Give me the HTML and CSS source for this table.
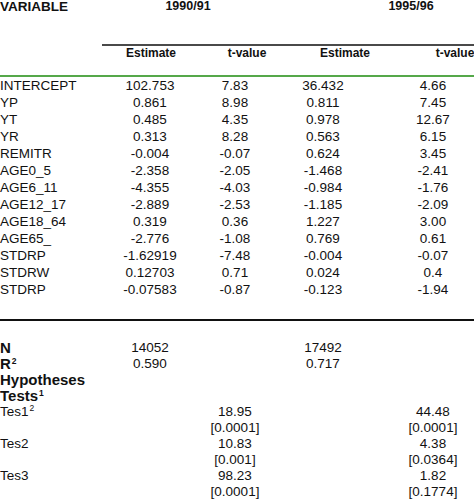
FILE: index.html
```html
<!DOCTYPE html>
<html>
<head>
<meta charset="utf-8">
<link rel="stylesheet" href="styles.css">
</head>
<body>
<div class="table">
  <div class="years">
    <span class="var">VARIABLE</span>
    <span class="yr">1990/91</span>
    <span></span>
    <span class="yr">1995/96</span>
  </div>
  <div class="rule-gray"></div>
  <div class="heads">
    <span></span>
    <span>Estimate</span>
    <span>t-value</span>
    <span>Estimate</span>
    <span>t-value</span>
  </div>
  <div class="rule-green"></div>
  <div class="rows">
    <div class="row"><span class="lbl">INTERCEPT</span><span class="v">102.753</span><span class="v">7.83</span><span class="v">36.432</span><span class="v">4.66</span></div>
    <div class="row"><span class="lbl">YP</span><span class="v">0.861</span><span class="v">8.98</span><span class="v">0.811</span><span class="v">7.45</span></div>
    <div class="row"><span class="lbl">YT</span><span class="v">0.485</span><span class="v">4.35</span><span class="v">0.978</span><span class="v">12.67</span></div>
    <div class="row"><span class="lbl">YR</span><span class="v">0.313</span><span class="v">8.28</span><span class="v">0.563</span><span class="v">6.15</span></div>
    <div class="row"><span class="lbl">REMITR</span><span class="v">-0.004</span><span class="v">-0.07</span><span class="v">0.624</span><span class="v">3.45</span></div>
    <div class="row"><span class="lbl">AGE0_5</span><span class="v">-2.358</span><span class="v">-2.05</span><span class="v">-1.468</span><span class="v">-2.41</span></div>
    <div class="row"><span class="lbl">AGE6_11</span><span class="v">-4.355</span><span class="v">-4.03</span><span class="v">-0.984</span><span class="v">-1.76</span></div>
    <div class="row"><span class="lbl">AGE12_17</span><span class="v">-2.889</span><span class="v">-2.53</span><span class="v">-1.185</span><span class="v">-2.09</span></div>
    <div class="row"><span class="lbl">AGE18_64</span><span class="v">0.319</span><span class="v">0.36</span><span class="v">1.227</span><span class="v">3.00</span></div>
    <div class="row"><span class="lbl">AGE65_</span><span class="v">-2.776</span><span class="v">-1.08</span><span class="v">0.769</span><span class="v">0.61</span></div>
    <div class="row"><span class="lbl">STDRP</span><span class="v">-1.62919</span><span class="v">-7.48</span><span class="v">-0.004</span><span class="v">-0.07</span></div>
    <div class="row"><span class="lbl">STDRW</span><span class="v">0.12703</span><span class="v">0.71</span><span class="v">0.024</span><span class="v">0.4</span></div>
    <div class="row"><span class="lbl">STDRP</span><span class="v">-0.07583</span><span class="v">-0.87</span><span class="v">-0.123</span><span class="v">-1.94</span></div>
  </div>
  <div class="rule-black"></div>
  <div class="stats">
    <div class="srow"><span class="blbl">N</span><span class="v">14052</span><span></span><span class="v">17492</span><span></span></div>
    <div class="srow"><span class="blbl">R<sup>2</sup></span><span class="v">0.590</span><span></span><span class="v">0.717</span><span></span></div>
    <div class="srow"><span class="blbl">Hypotheses</span></div>
    <div class="srow"><span class="blbl">Tests<sup>1</sup></span></div>
    <div class="srow"><span class="lbl">Tes1<sup>2</sup></span><span></span><span class="v">18.95<br>[0.0001]</span><span></span><span class="v">44.48<br>[0.0001]</span></div>
    <div class="srow"><span class="lbl">Tes2</span><span></span><span class="v">10.83<br>[0.001]</span><span></span><span class="v">4.38<br>[0.0364]</span></div>
    <div class="srow"><span class="lbl">Tes3</span><span></span><span class="v">98.23<br>[0.0001]</span><span></span><span class="v">1.82<br>[0.1774]</span></div>
  </div>
</div>
</body>
</html>
```
FILE: styles.css
```css
body {
  margin: 0;
  width: 474px;
  height: 500px;
  overflow: hidden;
  background: #fff;
  color: #111;
  font-family: "Liberation Sans", Arial, sans-serif;
}

.table {
  width: 490px;
}

.years {
  display: grid;
  grid-template-columns: 102px 172px 74px 126px;
  font-weight: bold;
  line-height: 13px;
}

.years .var {
  font-size: 13.5px;
}

.years .yr {
  font-size: 12.5px;
  text-align: center;
}

.rule-gray {
  margin: 31px 0 0 102px;
  height: 2px;
  background: #4a4a4a;
}

.heads {
  display: grid;
  grid-template-columns: 102px 98px 94px 102px 118px;
  font-size: 12px;
  font-weight: bold;
  line-height: 15px;
  padding-bottom: 14px;
}

.heads span {
  text-align: center;
}

.rule-green {
  height: 2px;
  background: #55a84a;
}

.row,
.srow {
  display: grid;
  grid-template-columns: 100px 100px 70px 106px 114px;
  font-size: 13.5px;
}

.row {
  line-height: 17px;
}

.srow {
  line-height: 16px;
}

.v {
  text-align: center;
}

.lbl {
  white-space: nowrap;
}

.blbl {
  font-weight: bold;
  font-size: 15px;
  white-space: nowrap;
}

sup {
  font-size: 8.5px;
  line-height: 0;
  vertical-align: 5px;
  margin-left: 1px;
}

.rule-black {
  margin-top: 21px;
  height: 2px;
  background: #111;
}

.stats {
  margin-top: 19px;
}
```
